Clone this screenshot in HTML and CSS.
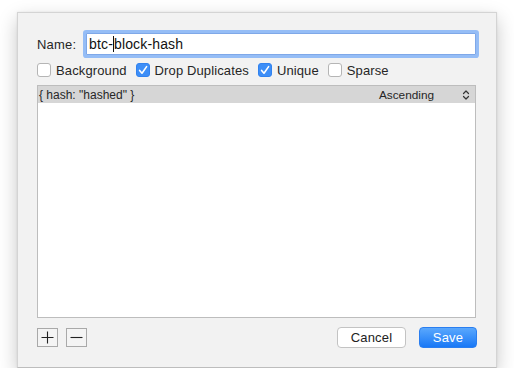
FILE: index.html
```html
<!DOCTYPE html>
<html>
<head>
<meta charset="utf-8">
<link rel="stylesheet" href="styles.css">
</head>
<body>
<div class="panel">
  <div class="name-row">
    <label class="name-label">Name:</label>
    <div class="input"><span>btc-</span><span class="caret"></span><span>block-hash</span></div>
  </div>
  <div class="checks">
    <label class="check"><span class="box"></span><span>Background</span></label>
    <label class="check"><span class="box on"><svg viewBox="0 0 14 14" width="14" height="14"><path d="M3.6 7.4 L6 10.2 L10.6 3.6" fill="none" stroke="#fff" stroke-width="1.6" stroke-linecap="round" stroke-linejoin="round"/></svg></span><span>Drop Duplicates</span></label>
    <label class="check"><span class="box on"><svg viewBox="0 0 14 14" width="14" height="14"><path d="M3.6 7.4 L6 10.2 L10.6 3.6" fill="none" stroke="#fff" stroke-width="1.6" stroke-linecap="round" stroke-linejoin="round"/></svg></span><span>Unique</span></label>
    <label class="check"><span class="box"></span><span>Sparse</span></label>
  </div>
  <div class="table">
    <div class="row-head">
      <span class="field">{ hash: "hashed" }</span>
      <span class="order">Ascending</span>
      <svg class="updown" viewBox="0 0 8 12" width="8" height="12"><path d="M1.5 4.5 L4 2 L6.5 4.5 M1.5 7.5 L4 10 L6.5 7.5" fill="none" stroke="#333" stroke-width="1.2" stroke-linecap="round" stroke-linejoin="round"/></svg>
    </div>
  </div>
  <div class="footer">
    <div class="pm">
      <button class="sq"><svg viewBox="0 0 21 19" width="21" height="19"><path d="M10.5 3.5 V15.5 M4.5 9.5 H16.5" stroke="#222" stroke-width="1.1"/></svg></button>
      <button class="sq"><svg viewBox="0 0 21 19" width="21" height="19"><path d="M4.5 9.5 H16.5" stroke="#222" stroke-width="1.1"/></svg></button>
    </div>
    <div class="actions">
      <button class="btn cancel">Cancel</button>
      <button class="btn save">Save</button>
    </div>
  </div>
</div>
</body>
</html>
```
FILE: styles.css
```css
* { box-sizing: border-box; }
html, body { margin: 0; padding: 0; background: #fff; }
body {
  font-family: "Liberation Sans", Arial, sans-serif;
  font-size: 13px;
  color: #262626;
}
.panel {
  margin: 12px 0 0 17px;
  width: 480px;
  height: 356px;
  background: #f2f2f2;
  border: 1px solid #d4d4d4;
  border-bottom-color: #bdbdbd;
  box-shadow: 0 7px 18px rgba(0,0,0,0.22), 0 0 2px rgba(0,0,0,0.08);
  padding: 20px 20px 0 19px;
  display: flex;
  flex-direction: column;
}
.name-row {
  display: flex;
  align-items: center;
  height: 22px;
}
.name-label { width: 49px; letter-spacing: 0.2px; }
.input {
  flex: 1;
  height: 22px;
  background: #fff;
  border: 1px solid #7fa8e8;
  box-shadow: 0 0 0 3px #95bdf6;
  border-radius: 1px;
  display: flex;
  align-items: center;
  padding-left: 2px;
  font-size: 14px;
  letter-spacing: 0.15px;
  color: #111;
}
.caret {
  display: inline-block;
  width: 1px;
  height: 16px;
  background: #111;
}
.checks {
  display: flex;
  align-items: center;
  gap: 9px;
  margin-top: 8px;
  height: 14px;
  letter-spacing: 0.12px;
}
.check { display: flex; align-items: center; gap: 5px; }
.box {
  width: 14px;
  height: 14px;
  background: #fff;
  border: 1px solid #b5b5b5;
  border-radius: 3px;
  display: block;
}
.box.on {
  background: #3d8ef7;
  border-color: #3182ef;
}
.box svg { display: block; margin: -1px; }
.table {
  margin-top: 8px;
  height: 233px;
  background: #fff;
  border: 1px solid #bdbdbd;
}
.row-head {
  height: 17px;
  background: #d6d6d6;
  display: flex;
  align-items: center;
  font-size: 12px;
  color: #262626;
  padding: 0 5px 0 1px;
}
.field { flex: 1; }
.order { margin-right: 28px; font-size: 11.8px; }
.updown { display: block; }
.footer {
  margin-top: 9px;
  display: flex;
  justify-content: space-between;
  align-items: center;
}
.pm { display: flex; gap: 8px; }
.sq {
  width: 21px;
  height: 19px;
  padding: 0;
  margin: 0;
  border: 1px solid #a9a9a9;
  background: #f4f4f4;
  display: block;
}
.sq svg { display: block; margin: -1px; }
.actions { display: flex; gap: 13px; margin-right: -1px; }
.btn {
  height: 21px;
  font-family: "Liberation Sans", Arial, sans-serif;
  font-size: 13px;
  letter-spacing: 0.2px;
  border-radius: 4px;
  padding: 0;
  margin: 0;
}
.cancel {
  width: 69px;
  background: #fff;
  border: 1px solid #c3c3c3;
  color: #222;
}
.save {
  width: 58px;
  background: linear-gradient(#5aa8fd, #1978f6);
  border: 1px solid #2a7ef0;
  color: #fff;
}
```
